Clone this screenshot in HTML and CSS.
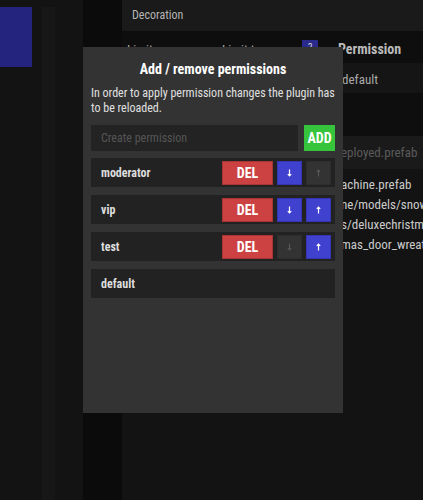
FILE: index.html
```html
<!DOCTYPE html>
<html>

<head>
    <meta charset="UTF-8" />
    <title>Permissions</title>
    <link rel="stylesheet" href="styles.css">
</head>

<body>
    <div class="app">
        <div class="sidebar">
            <div class="logo"></div>
            <div class="strip"></div>
        </div>
        <div class="gutter"></div>
        <div class="main">
            <div class="topbar">Decoration</div>
            <div class="table">
                <div class="thead">
                    <span>Limit</span>
                    <span>Limit type</span>
                    <span class="badge">?</span>
                    <span class="th-perm">Permission</span>
                </div>
                <div class="trow">
                    <span></span>
                    <span></span>
                    <span></span>
                    <span class="cell">default</span>
                </div>
                <div class="spacer"></div>
                <div class="search">eployed.prefab</div>
            </div>
            <div class="paths">
                <div>achine.prefab</div>
                <div>ne/models/snow</div>
                <div>s/deluxechristma</div>
                <div>mas_door_wreat</div>
            </div>
        </div>
    </div>

    <div class="modal">
        <div class="modal-title">Add / remove permissions</div>
        <p class="modal-text">In order to apply permission changes the plugin has to be reloaded.</p>
        <div class="create">
            <input type="text" class="create-input" placeholder="Create permission">
            <button class="btn-add">ADD</button>
        </div>
        <div class="perm-list">
            <div class="perm-row">
                <span class="perm-name">moderator</span>
                <button class="btn-del">DEL</button>
                <button class="btn-move"><svg width="5" height="8" viewBox="0 0 5 8"><path d="M2.5 0.5V7M0.8 5.2L2.5 7L4.2 5.2" fill="none" stroke="currentColor" stroke-width="1.2"/></svg></button>
                <button class="btn-move off"><svg width="5" height="8" viewBox="0 0 5 8"><path d="M2.5 7.5V1M0.8 2.8L2.5 1L4.2 2.8" fill="none" stroke="currentColor" stroke-width="1.2"/></svg></button>
            </div>
            <div class="perm-row">
                <span class="perm-name">vip</span>
                <button class="btn-del">DEL</button>
                <button class="btn-move"><svg width="5" height="8" viewBox="0 0 5 8"><path d="M2.5 0.5V7M0.8 5.2L2.5 7L4.2 5.2" fill="none" stroke="currentColor" stroke-width="1.2"/></svg></button>
                <button class="btn-move"><svg width="5" height="8" viewBox="0 0 5 8"><path d="M2.5 7.5V1M0.8 2.8L2.5 1L4.2 2.8" fill="none" stroke="currentColor" stroke-width="1.2"/></svg></button>
            </div>
            <div class="perm-row">
                <span class="perm-name">test</span>
                <button class="btn-del">DEL</button>
                <button class="btn-move off"><svg width="5" height="8" viewBox="0 0 5 8"><path d="M2.5 0.5V7M0.8 5.2L2.5 7L4.2 5.2" fill="none" stroke="currentColor" stroke-width="1.2"/></svg></button>
                <button class="btn-move"><svg width="5" height="8" viewBox="0 0 5 8"><path d="M2.5 7.5V1M0.8 2.8L2.5 1L4.2 2.8" fill="none" stroke="currentColor" stroke-width="1.2"/></svg></button>
            </div>
            <div class="perm-row">
                <span class="perm-name">default</span>
            </div>
        </div>
    </div>
</body>

</html>
```

FILE: styles.css
```css
body {
    font-family: "Roboto Condensed", Roboto, sans-serif;
    font-stretch: condensed;
    font-size: 13px;
    color: #ccc;
    background-color: #131313;
    margin: 0;
    padding: 0;
    height: 500px;
    overflow: hidden;
}

.app {
    display: flex;
    height: 500px;
}

/* left navigation */
.sidebar {
    width: 83px;
    display: flex;
    gap: 10px;
    padding-top: 7px;
    box-sizing: border-box;
}

.logo {
    width: 32px;
    height: 60px;
    background-color: #24247e;
}

.strip {
    width: 13px;
    background-color: #171717;
}

.gutter {
    width: 39px;
    background-color: #0b0b0b;
}

.main {
    flex: 1;
    display: flex;
    flex-direction: column;
    overflow: hidden;
}

.topbar {
    height: 31px;
    line-height: 31px;
    padding-left: 10px;
    background-color: #1a1a1a;
    color: #b5b5b5;
    font-size: 12px;
}

.table {
    background-color: #0e0e0e;
}

.thead,
.trow {
    display: grid;
    grid-template-columns: 95px 80px 36px 1fr;
    padding-left: 5px;
    align-items: center;
}

.thead {
    height: 32px;
    box-sizing: border-box;
    padding-top: 4px;
    color: #aaa;
}

.badge {
    width: 16px;
    height: 16px;
    background-color: #2a2a8c;
    color: #ccc;
    font-size: 11px;
    text-align: center;
    line-height: 16px;
    margin-top: -2px;
}

.th-perm {
    font-weight: bold;
    font-size: 14px;
    color: #bbb;
}

.trow {
    height: 30px;
    background-color: #151515;
}

.cell {
    padding-left: 4px;
    padding-top: 2px;
    color: #aaa;
}

.spacer {
    height: 43px;
}

.search {
    height: 33px;
    line-height: 33px;
    padding-left: 219px;
    background-color: #1a1a1a;
    color: #5a5a5a;
    white-space: nowrap;
}

.paths {
    padding: 6px 0 0 219px;
    white-space: nowrap;
}

.paths div {
    height: 20px;
    line-height: 20px;
}

/* modal */
.modal {
    position: absolute;
    left: 83px;
    top: 47px;
    width: 260px;
    height: 366px;
    box-sizing: border-box;
    padding: 12px 8px;
    background-color: #333;
}

.modal-title {
    font-size: 14px;
    font-weight: bold;
    line-height: 21px;
    color: #fff;
    text-align: center;
}

.modal-text {
    margin: 6px -5px 9px 0;
    font-size: 12px;
    line-height: 15px;
    color: #e0e0e0;
}

.create {
    display: flex;
    gap: 6px;
    height: 26px;
}

.create-input {
    flex: 1;
    min-width: 0;
    border: none;
    outline: none;
    background-color: #232323;
    color: #ddd;
    font-family: inherit;
    font-stretch: inherit;
    font-size: 12px;
    padding: 0 10px;
}

.create-input::placeholder {
    color: #555;
}

.btn-add {
    width: 31px;
    border: none;
    padding: 0;
    background-color: #36c43c;
    color: #fff;
    font-family: inherit;
    font-stretch: inherit;
    font-weight: bold;
    font-size: 14px;
}

.perm-list {
    margin-top: 7px;
    display: flex;
    flex-direction: column;
    gap: 8px;
}

.perm-row {
    display: flex;
    align-items: center;
    gap: 4px;
    height: 29px;
    padding: 0 4px 0 10px;
    background-color: #222;
}

.perm-name {
    flex: 1;
    font-size: 12px;
    font-weight: bold;
    color: #ddd;
}

.btn-del {
    width: 51px;
    height: 24px;
    border: 1px solid #a83434;
    padding: 0;
    background-color: #cc4242;
    color: #fff;
    font-family: inherit;
    font-stretch: inherit;
    font-weight: bold;
    font-size: 14px;
}

.btn-move {
    width: 25px;
    height: 24px;
    border: 1px solid #3535b0;
    padding: 0;
    background-color: #4141cf;
    color: #fff;
    display: flex;
    align-items: center;
    justify-content: center;
}

.btn-move.off {
    border-color: #2d2d2d;
    background-color: #333;
    color: #555;
}
```
